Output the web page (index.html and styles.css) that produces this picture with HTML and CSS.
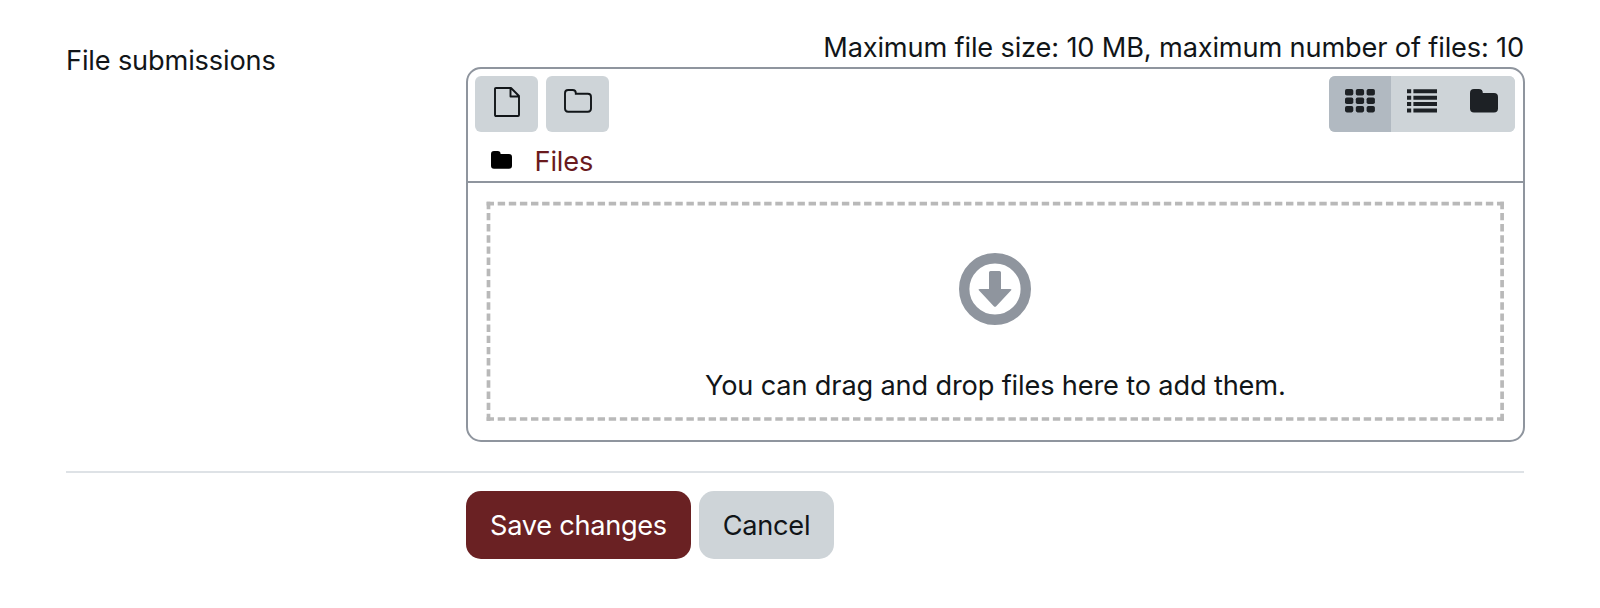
FILE: index.html
```html
<!DOCTYPE html>
<html lang="en">
<head>
<meta charset="utf-8">
<title>File submissions</title>
<link rel="stylesheet" href="styles.css">
</head>
<body>
<main class="form">
  <div class="row">
    <div class="label"><span>File submissions</span></div>
    <div class="field">
      <div class="limits"><span>Maximum file size: 10 MB, maximum number of files: 10</span></div>
      <section class="manager">
        <header class="toolbar">
          <div class="tools">
            <button class="tool" aria-label="Add file"><svg width="26" height="30" viewBox="0 0 26 30" fill="none" stroke="#111518" stroke-width="1.9" stroke-linejoin="round"><path d="M2 1H17L25 9V28Q25 29 24 29H2Q1 29 1 28V2Q1 1 2 1ZM16.5 1V9.5H25"/></svg></button>
            <button class="tool" aria-label="Create folder"><svg class="folder-line" width="28" height="24" viewBox="0 0 28 24" fill="none" stroke="#111518" stroke-width="1.9"><path d="M1 4.2Q1 1 4.2 1H8.6Q11.8 1 11.8 4.2V4.8H23.8Q27 4.8 27 8V19.6Q27 22.8 23.8 22.8H4.2Q1 22.8 1 19.6Z"/></svg></button>
          </div>
          <div class="views">
            <button class="view active" aria-label="Icons"><svg width="30" height="24" viewBox="0 0 30 24" fill="#1d2125"><g id="r"><rect width="8.3" height="6.5" rx="1.8"/><rect x="10.8" width="8.3" height="6.5" rx="1.8"/><rect x="21.6" width="8.3" height="6.5" rx="1.8"/></g><use href="#r" y="8.5"/><use href="#r" y="16.9"/></svg></button>
            <button class="view" aria-label="List"><svg width="30" height="24" viewBox="0 0 30 24" fill="#1d2125"><path d="M0 .2h4.2v4H0zM6.4 .2H30v4H6.4zM0 6.7h4.2v4H0zM6.4 6.7H30v4H6.4zM0 13.1h4.2v4H0zM6.4 13.1H30v4H6.4zM0 19.4h4.2v4H0zM6.4 19.4H30v4H6.4z"/></svg></button>
            <button class="view" aria-label="Tree"><svg width="28" height="24" viewBox="0 0 28 24" fill="#1d2125"><path d="M0 4Q0 0 4 0H8.8Q12.8 0 12.8 4H24Q28 4 28 8V19.5Q28 23.5 24 23.5H4Q0 23.5 0 19.5Z"/></svg></button>
          </div>
        </header>
        <nav class="path"><svg width="21" height="18" viewBox="0 0 28 24" fill="#000"><path d="M0 4Q0 0 4 0H8.8Q12.8 0 12.8 4H24Q28 4 28 8V19.5Q28 23.5 24 23.5H4Q0 23.5 0 19.5Z"/></svg><a>Files</a></nav>
        <div class="content">
          <div class="drop">
            <svg class="dashes" width="1018" height="220" viewBox="0 0 1018 220" fill="none" stroke="#b9b9b9" stroke-width="3.7"><path stroke-dasharray="7.4 3.703" d="M.6 2.6H1018M.6 218H1018"/><path stroke-dasharray="7.4 3.76" d="M2.5 .8V219.9M1016.1 .8V219.9"/></svg>
            <svg class="arrow" width="72" height="72" viewBox="0 0 72 72"><circle cx="36" cy="36" r="30.8" fill="none" stroke="#8f959e" stroke-width="10.4"/><path fill="#8f959e" d="M31.5 18H40.5Q42 18 42 19.5V36H51.2Q53.3 36 51.9 37.6L37.2 53.2Q36 54.5 34.8 53.2L20.1 37.6Q18.7 36 20.8 36H30V19.5Q30 18 31.5 18Z"/></svg>
            <span class="hint">You can drag and drop files here to add them.</span>
          </div>
        </div>
      </section>
    </div>
  </div>
  <hr class="rule">
  <div class="actions"><button class="btn save">Save changes</button><button class="btn cancel">Cancel</button></div>
</main>
</body>
</html>
```
FILE: styles.css
```css
* { box-sizing: border-box; }
body { margin: 0; background: #fff; color: #111518; font: 27.2px/36px Inter, "Liberation Sans", sans-serif; letter-spacing: -.16px; }
button { border: 0; padding: 0; color: inherit; font: inherit; letter-spacing: inherit; }
svg { display: block; flex: none; }
.form { padding: 30px 76px 0 66px; }
.row { display: flex; }
.label { width: 400px; padding-top: 13px; white-space: nowrap; }
.field { width: 1058px; }
.limits { height: 37px; text-align: right; white-space: nowrap; }
.manager { width: 1058.5px; height: 375px; border: 2px solid #8f959e; border-radius: 15px; }
.toolbar { display: flex; justify-content: space-between; padding: 7px 7.5px 0 7px; }
.tools { display: flex; gap: 8px; }
.tool { width: 63px; height: 56px; border-radius: 6px; background: #ced4d8; display: flex; justify-content: center; padding-top: 10.5px; }
.folder-line { margin-top: 2px; }
.views { display: flex; width: 186px; height: 56px; border-radius: 6px; overflow: hidden; background: #ced4d8; }
.view { flex: 1; display: flex; justify-content: center; padding-top: 13px; background: #ced4d8; }
.view.active { background: #b1b9c1; }
.path { display: flex; align-items: center; height: 51px; padding: 10px 0 0 23px; gap: 22.5px; color: #6a1a1d; border-bottom: 2px solid #8f959e; }
.path svg { margin-top: -4px; }
.content { padding: 18px 18px 0; }
.drop { position: relative; height: 220px; display: flex; flex-direction: column; align-items: center; padding-top: 52px; }
.dashes { position: absolute; top: 0; left: 0; }
.hint { margin-top: 43px; white-space: nowrap; }
.rule { margin: 29px 0 0; border: 0; height: 2px; background: #dee2e6; }
.actions { display: flex; gap: 8px; padding: 18px 0 0 400px; }
.btn { height: 68px; padding-top: 2px; border-radius: 15px; white-space: nowrap; }
.save { width: 225px; background: #6a2123; color: #fff; letter-spacing: -.3px; }
.cancel { width: 135px; background: #ced4d8; letter-spacing: -.3px; }
```
